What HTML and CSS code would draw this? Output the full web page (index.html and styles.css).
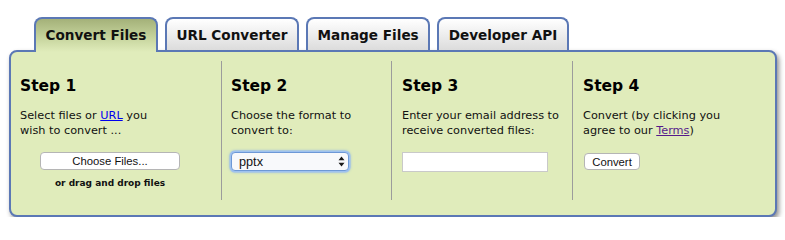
FILE: index.html
```html
<!DOCTYPE html>
<html lang="en">
<head>
<meta charset="utf-8">
<title>Convert Files</title>
<link rel="stylesheet" href="styles.css">
</head>
<body>
<div class="page">
  <nav class="tabs">
    <div class="tab active">Convert Files</div>
    <div class="tab">URL Converter</div>
    <div class="tab">Manage Files</div>
    <div class="tab">Developer API</div>
  </nav>
  <div class="panel">
    <div class="col col1">
      <h2>Step 1</h2>
      <p>Select files or <a class="link" href="#">URL</a> you<br>wish to convert ...</p>
      <div class="upload">
        <button class="btn choose" type="button">Choose Files...</button>
        <div class="drop">or drag and drop files</div>
      </div>
    </div>
    <div class="col col2">
      <h2>Step 2</h2>
      <p>Choose the format to<br>convert to:</p>
      <div class="select-wrap">
        <select class="select"><option>pptx</option></select>
        <svg class="arrows" width="7" height="11" viewBox="0 0 7 11"><path d="M0.5 4.2 L3.5 0.5 L6.5 4.2 Z M0.5 6.8 L3.5 10.5 L6.5 6.8 Z" fill="#1a1a1a"/></svg>
      </div>
    </div>
    <div class="col col3">
      <h2>Step 3</h2>
      <p>Enter your email address to<br>receive converted files:</p>
      <input class="email" type="text">
    </div>
    <div class="col col4">
      <h2>Step 4</h2>
      <p>Convert (by clicking you<br>agree to our <a class="link visited" href="#">Terms</a>)</p>
      <button class="btn convert" type="button">Convert</button>
    </div>
  </div>
</div>
</body>
</html>
```
FILE: styles.css
```css
html, body {
  margin: 0;
  background: #ffffff;
}
body {
  font-family: "DejaVu Sans", Verdana, sans-serif;
  color: #111;
}
.page {
  padding: 17px 8px 0 9px;
}
.tabs {
  display: flex;
  align-items: flex-start;
  gap: 7px;
  margin: 0 0 -2px 25px;
  position: relative;
  z-index: 1;
}
.tab {
  border: 2px solid #5b78b5;
  border-bottom: 0;
  border-radius: 8px 8px 0 0;
  padding: 0 9.5px;
  height: 31px;
  line-height: 32px;
  font-weight: bold;
  font-size: 13.6px;
  color: #111;
  background: linear-gradient(#ffffff, #dcdcdc);
}
.tab.active {
  height: 33px;
  background: linear-gradient(#a4b179, #c5d39c 55%, #e0ecbb);
}
.panel {
  display: flex;
  border: 2px solid #5b78b5;
  border-radius: 8px;
  background: #e0ecbb;
  box-shadow: 2px 3px 5px rgba(0, 0, 0, 0.45);
  padding: 9px 0 15px 0;
}
.col {
  box-sizing: border-box;
  height: 139px;
  padding: 16px 9px 0 9px;
}
.col + .col {
  border-left: 1px solid #9c9c9c;
}
.col1 { width: 210px; }
.col2 { width: 170px; }
.col3 { width: 181px; padding-left: 10px; }
.col4 { flex: 1; padding-left: 10px; }
h2 {
  margin: 0;
  font-size: 15.5px;
  line-height: 19px;
  font-weight: bold;
  color: #000;
}
p {
  margin: 12px 0 0;
  font-size: 11.3px;
  line-height: 15px;
  color: #111;
}
.link {
  color: #0000ee;
  text-decoration: underline;
}
.link.visited {
  color: #551a8b;
}
.btn {
  display: block;
  box-sizing: border-box;
  background: #ffffff;
  border: 1px solid #b5b5b5;
  border-radius: 4px;
  font-family: "Liberation Sans", Arial, sans-serif;
  font-size: 11.3px;
  color: #111;
  padding: 0;
}
.upload {
  width: 180px;
  margin-top: 14px;
  text-align: center;
}
.choose {
  width: 140px;
  height: 18px;
  margin: 0 auto;
}
.drop {
  margin-top: 7px;
  font-size: 9px;
  line-height: 12px;
  font-weight: bold;
  color: #111;
}
.select-wrap {
  position: relative;
  width: 118px;
  margin-top: 14px;
}
.select {
  display: block;
  box-sizing: border-box;
  width: 118px;
  height: 19px;
  -webkit-appearance: none;
  appearance: none;
  background: #f8f9fb;
  border: 1px solid #6d98d6;
  border-radius: 4px;
  box-shadow: 0 0 0 1.5px #9fc2ef, 0 0 3px 1px #7eaae6;
  font-family: "Liberation Sans", Arial, sans-serif;
  font-size: 12.7px;
  color: #111;
  padding: 0 0 0 7px;
  outline: none;
}
.arrows {
  position: absolute;
  right: 4px;
  top: 4px;
}
.email {
  display: block;
  box-sizing: border-box;
  width: 146px;
  height: 20px;
  margin-top: 14px;
  background: #ffffff;
  border: 1px solid #c9c9c9;
  padding: 0 3px;
}
.convert {
  width: 56px;
  height: 17px;
  margin: 15px 0 0 1px;
}
```
